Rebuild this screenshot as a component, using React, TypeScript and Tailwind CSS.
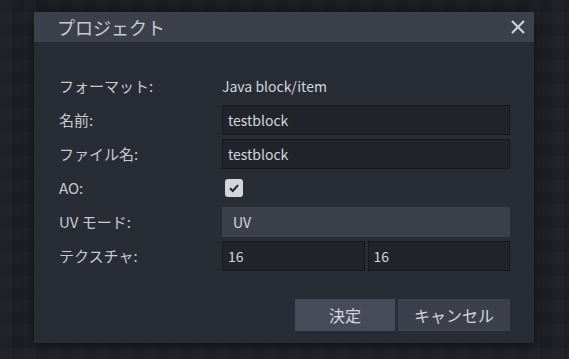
const font = { fontFamily: '"Noto Sans CJK JP", "Noto Sans", sans-serif' };

function Row({ label, children }: { label: string; children: React.ReactNode }) {
  return (
    <div className="flex h-[30px] items-center">
      <div className="w-[163px] shrink-0 text-[15px] text-[#c9cbd1]">{label}</div>
      <div className="flex h-full flex-1 items-center">{children}</div>
    </div>
  );
}

function TextInput({ value }: { value: string }) {
  return (
    <div className="flex h-full flex-1 items-center border border-[#16181c] bg-[#21252b] pl-[5px] text-[14px] text-[#d4d6db]">
      {value}
    </div>
  );
}

export default function App() {
  return (
    <div
      style={font}
      className="flex h-[359px] w-[569px] items-start justify-start bg-[#1c1e23] bg-[linear-gradient(90deg,rgba(255,255,255,0.012)_50%,transparent_50%),linear-gradient(0deg,rgba(255,255,255,0.012)_50%,transparent_50%)] bg-[length:24px_24px] pl-[34px] pt-[12px]"
    >
      <div className="flex h-[331px] w-[500px] flex-col bg-[#282c34] shadow-[0_0_14px_rgba(0,0,0,0.55)]">
        <div className="flex h-[30px] shrink-0 items-center justify-between bg-[#3c404b] pl-[23px] pr-[8px]">
          <span className="text-[18px] leading-none text-[#c9cbd1]">プロジェクト</span>
          <svg width="16" height="16" viewBox="0 0 16 16" className="text-[#cfd1d6]">
            <path d="M2 2 L14 14 M14 2 L2 14" stroke="currentColor" strokeWidth="2.2" />
          </svg>
        </div>
        <div className="flex flex-1 flex-col pl-[25px] pr-[24px] pt-[29px]">
          <div className="flex flex-col gap-[4px]">
            <Row label="フォーマット:">
              <span className="text-[14px] text-[#d4d6db]">Java block/item</span>
            </Row>
            <Row label="名前:">
              <TextInput value="testblock" />
            </Row>
            <Row label="ファイル名:">
              <TextInput value="testblock" />
            </Row>
            <Row label="AO:">
              <div className="ml-[3px] flex h-[18px] w-[18px] items-center justify-center rounded-[3px] bg-[#d3d5da]">
                <svg width="12" height="12" viewBox="0 0 12 12">
                  <path d="M2 6.2 L4.8 9 L10 3.2" fill="none" stroke="#22252b" strokeWidth="2" />
                </svg>
              </div>
            </Row>
            <Row label="UV モード:">
              <div className="flex h-full flex-1 items-center bg-[#3c404b] pl-[11px] text-[14px] text-[#d4d6db]">UV</div>
            </Row>
            <Row label="テクスチャ:">
              <div className="flex h-full flex-1 gap-[3px]">
                <TextInput value="16" />
                <TextInput value="16" />
              </div>
            </Row>
          </div>
          <div className="mt-[28px] flex justify-end gap-[3px]">
            <button className="h-[32px] w-[100px] bg-[#474b59] text-[16px] text-[#d4d6db]">決定</button>
            <button className="h-[32px] w-[112px] bg-[#3c404b] text-[16px] text-[#d4d6db]">キャンセル</button>
          </div>
        </div>
      </div>
    </div>
  );
}
